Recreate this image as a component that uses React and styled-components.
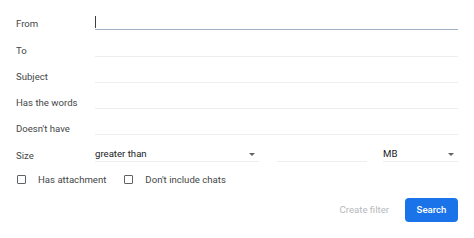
import React from 'react';
import styled, { createGlobalStyle } from 'styled-components';

const Global = createGlobalStyle`
  html, body { margin:0; padding:0; background:#fff; }
  body { font-family: Roboto, "Liberation Sans", Arial, sans-serif; }
`;

const Panel = styled.div`
  width:474px;
  height:238px;
  box-sizing:border-box;
  padding:8px 16px 0 16px;
  display:flex;
  flex-flow:column;
`;

const Row = styled.div`
  display:grid;
  grid-template-columns:79px 1fr;
  align-items:end;
  height:26.3px;
`;

const Label = styled.div`
  font-size:9.6px;
  color:#444746;
  line-height:14px;
  padding-bottom:3px;
`;

const Field = styled.div`
  height:19px;
  box-sizing:border-box;
  border-bottom:1px solid ${(p) => (p.focus ? '#a3b1c6' : '#eceef1')};
  display:flex;
  align-items:center;
  margin-bottom:4px;
`;

const Caret = styled.div`
  width:1px;
  height:12px;
  background:#3c4043;
  margin-top:4px;
`;

const SizeFields = styled.div`
  display:flex;
  align-items:end;
  margin-bottom:4px;
`;

const Select = styled.div`
  width:${(p) => p.w}px;
  height:19px;
  box-sizing:border-box;
  border-bottom:1px solid #eceef1;
  display:flex;
  align-items:flex-end;
  justify-content:space-between;
  font-size:9.6px;
  color:#202124;
  padding:0 4px 0 0;
  line-height:14px;
  margin-right:${(p) => p.mr || 0}px;
`;

const Arrow = styled.span`
  width:0;
  height:0;
  border-left:3px solid transparent;
  border-right:3px solid transparent;
  border-top:3px solid #5f6368;
  margin-bottom:5px;
`;

const NumInput = styled.div`
  width:90px;
  height:19px;
  box-sizing:border-box;
  border-bottom:1px solid #eceef1;
  margin-right:16px;
`;

const Checks = styled.div`
  display:flex;
  align-items:center;
  height:26px;
  margin-top:1px;
  padding-left:1px;
`;

const Check = styled.label`
  display:flex;
  align-items:center;
  font-size:9.6px;
  color:#444746;
  margin-right:${(p) => p.mr || 0}px;
`;

const Box = styled.span`
  width:7px;
  height:7px;
  border:1.5px solid #5f6368;
  border-radius:1px;
  margin-right:12px;
`;

const Actions = styled.div`
  display:flex;
  justify-content:flex-end;
  align-items:center;
  margin-top:5px;
`;

const TextButton = styled.div`
  font-size:9.6px;
  color:#b6b9bd;
  margin-right:16px;
`;

const Primary = styled.div`
  width:53px;
  height:24px;
  border-radius:4px;
  background:#1a73e8;
  color:#fff;
  font-size:9.6px;
  font-weight:500;
  display:flex;
  align-items:center;
  justify-content:center;
`;

const fields = ['To', 'Subject', 'Has the words', "Doesn't have"];

const App = () => {
  return (
    <Panel>
      <Global />
      <Row>
        <Label>From</Label>
        <Field focus>
          <Caret />
        </Field>
      </Row>
      {fields.map((f) => (
        <Row key={f}>
          <Label>{f}</Label>
          <Field />
        </Row>
      ))}
      <Row>
        <Label>Size</Label>
        <SizeFields>
          <Select w={164} mr={18}>
            greater than
            <Arrow />
          </Select>
          <NumInput />
          <Select w={75}>
            MB
            <Arrow />
          </Select>
        </SizeFields>
      </Row>
      <Checks>
        <Check mr={18}>
          <Box />
          Has attachment
        </Check>
        <Check>
          <Box />
          Don't include chats
        </Check>
      </Checks>
      <Actions>
        <TextButton>Create filter</TextButton>
        <Primary>Search</Primary>
      </Actions>
    </Panel>
  );
};

export default App;
